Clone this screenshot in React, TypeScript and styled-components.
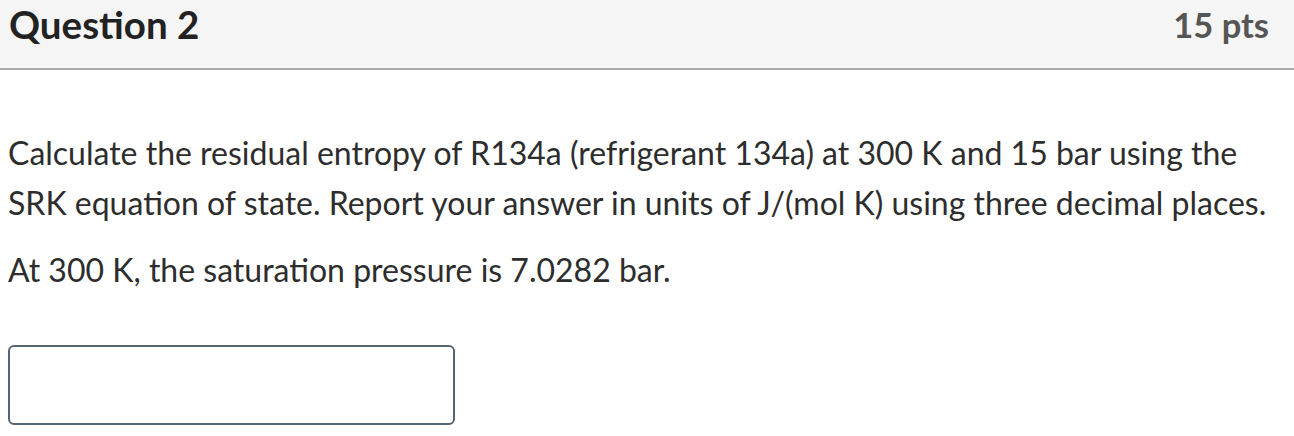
import React from "react";
import styled, { createGlobalStyle } from "styled-components";

const Global = createGlobalStyle`
  html, body { margin: 0; padding: 0; background: #ffffff; }
  body { font-family: Lato, "Noto Sans", sans-serif; }
`;

const Page = styled.div`
  width: 1294px;
  height: 436px;
  overflow: hidden;
  background: #ffffff;
`;

const Header = styled.header`
  display: flex;
  align-items: center;
  justify-content: space-between;
  height: 70px;
  box-sizing: border-box;
  padding: 0 25px 19px 9px;
  background: #f5f5f5;
  border-bottom: 2px solid #aaaaaa;
`;

const Title = styled.h2`
  margin: 0;
  font-size: 38.5px;
  line-height: 1;
  font-weight: 700;
  color: #222222;
`;

const Points = styled.span`
  font-size: 34.5px;
  line-height: 1;
  font-weight: 700;
  color: #555555;
  margin-top: 2px;
`;

const Body = styled.section`
  padding: 58px 8px 0 8px;
`;

const Para = styled.p`
  margin: 0 0 17px 0;
  font-size: 32px;
  line-height: 50px;
  color: #2d2d2d;
`;

const Answer = styled.input`
  display: block;
  margin-top: 50px;
  width: 447px;
  height: 80px;
  box-sizing: border-box;
  border: 2px solid #566574;
  border-radius: 6px;
  background: #ffffff;
  font-family: Lato, sans-serif;
  font-size: 20px;
  outline: none;
`;

export default function App() {
  return (
    <Page>
      <Global />
      <Header>
        <Title>Question 2</Title>
        <Points>15 pts</Points>
      </Header>
      <Body>
        <Para>
          Calculate the residual entropy of R134a (refrigerant 134a) at 300 K and 15 bar using the
          SRK equation of state. Report your answer in units of J/(mol K) using three decimal places.
        </Para>
        <Para>At 300 K, the saturation pressure is 7.0282 bar.</Para>
        <Answer type="text" aria-label="Answer" />
      </Body>
    </Page>
  );
}
